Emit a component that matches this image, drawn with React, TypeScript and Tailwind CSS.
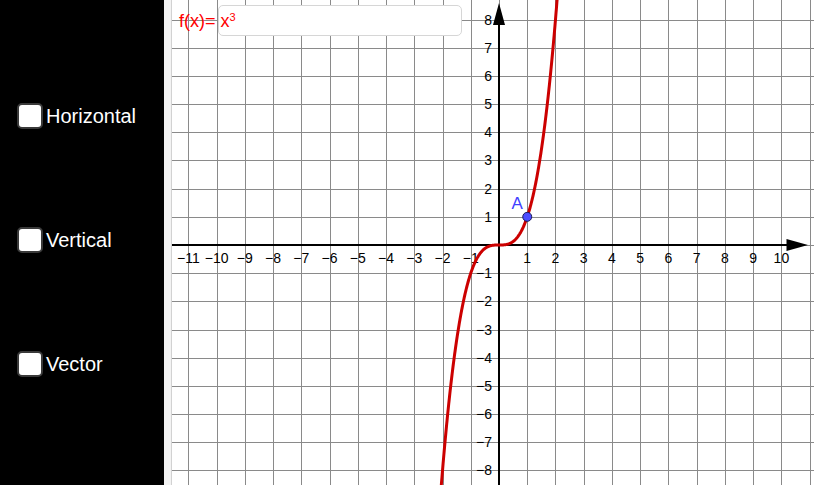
const OX = 499;
const OY = 245;
const UX = 28.24;
const UY = 28.18;

const px = (x: number) => OX + x * UX;
const py = (y: number) => OY - y * UY;

const curvePoints = () => {
  const pts: string[] = [];
  for (let i = -220; i <= 220; i++) {
    const x = i / 100;
    pts.push(`${px(x).toFixed(2)},${py(x * x * x).toFixed(2)}`);
  }
  return pts.join(" ");
};

const Checkbox = ({ label }: { label: string }) => (
  <label className="flex h-[26px] items-center gap-[3px]">
    <span className="h-[26px] w-[26px] rounded-[5px] border-2 border-[#3a3a3a] bg-white" />
    <span className="text-[20px] leading-none text-white">{label}</span>
  </label>
);

const Graph = () => {
  const xs: number[] = [];
  for (let k = -11; k <= 11; k++) xs.push(k);
  const ys: number[] = [];
  for (let k = -8; k <= 8; k++) ys.push(k);

  return (
    <svg
      width="642"
      height="485"
      viewBox="172 0 642 485"
      className="block"
      style={{ fontFamily: '"Liberation Sans", Arial, sans-serif' }}
    >
      {/* grid */}
      <g stroke="#8a8a8a" strokeWidth="1" shapeRendering="crispEdges">
        {xs.map((k) => (
          <line key={`v${k}`} x1={Math.round(px(k)) + 0.5} y1="0" x2={Math.round(px(k)) + 0.5} y2="485" />
        ))}
        {ys.map((k) => (
          <line key={`h${k}`} x1="172" y1={Math.round(py(k)) + 0.5} x2="814" y2={Math.round(py(k)) + 0.5} />
        ))}
      </g>

      {/* axes */}
      <g stroke="#000" strokeWidth="2" shapeRendering="crispEdges">
        <line x1="172" y1={OY} x2="790" y2={OY} />
        <line x1={OX} y1="485" x2={OX} y2="20" />
      </g>
      <polygon points={`${OX},3 ${OX - 6},25 ${OX + 6},25`} fill="#000" />
      <polygon points={`808,${OY} 786.5,${OY - 6} 786.5,${OY + 6}`} fill="#000" />

      {/* tick labels */}
      <g fontSize="14" fill="#000">
        {xs
          .filter((k) => k !== 0 && k <= 10)
          .map((k) => (
            <text key={`xl${k}`} x={px(k)} y="262.5" textAnchor="middle">
              {k < 0 ? `\u2212${-k}` : k}
            </text>
          ))}
        {ys
          .filter((k) => k !== 0)
          .map((k) => (
            <text key={`yl${k}`} x="492" y={py(k) + 5} textAnchor="end">
              {k < 0 ? `\u2212${-k}` : k}
            </text>
          ))}
      </g>

      {/* f(x) = x^3 */}
      <polyline
        points={curvePoints()}
        fill="none"
        stroke="#cc0000"
        strokeWidth="3"
        strokeLinejoin="round"
        strokeLinecap="round"
      />

      {/* point A */}
      <circle cx={px(1)} cy={py(1)} r="4.5" fill="#4d4dff" stroke="#1a1a5e" strokeWidth="1" />
      <text x="511.5" y="208.5" fontSize="17" fill="#4040ff">
        A
      </text>
    </svg>
  );
};

export default function App() {
  return (
    <div
      className="flex h-[485px] w-[814px] overflow-hidden bg-white"
      style={{ fontFamily: '"Liberation Sans", Arial, sans-serif' }}
    >
      {/* Checkbox panel */}
      <aside className="flex w-[164px] shrink-0 flex-col gap-[98px] bg-black pl-[17px] pt-[103px]">
        <Checkbox label="Horizontal" />
        <Checkbox label="Vertical" />
        <Checkbox label="Vector" />
      </aside>

      {/* Divider strip */}
      <div className="w-[8px] shrink-0 border-r border-[#d2d2d2] bg-[#f3f3f3]" />

      {/* Graphics view */}
      <main className="relative flex-1">
        <Graph />

        {/* Input bar */}
        <div className="absolute left-[7px] top-[5px] flex items-center gap-[2px]">
          <span className="text-[18px] leading-none text-[#ff0000]">f(x)=</span>
          <div className="flex h-[31px] w-[244px] items-center rounded-[5px] border border-[#d6d6d6] bg-white pl-[2px]">
            <span className="text-[18px] leading-none text-[#ff0000]">
              x<sup className="text-[11px]">3</sup>
            </span>
          </div>
        </div>
      </main>
    </div>
  );
}
